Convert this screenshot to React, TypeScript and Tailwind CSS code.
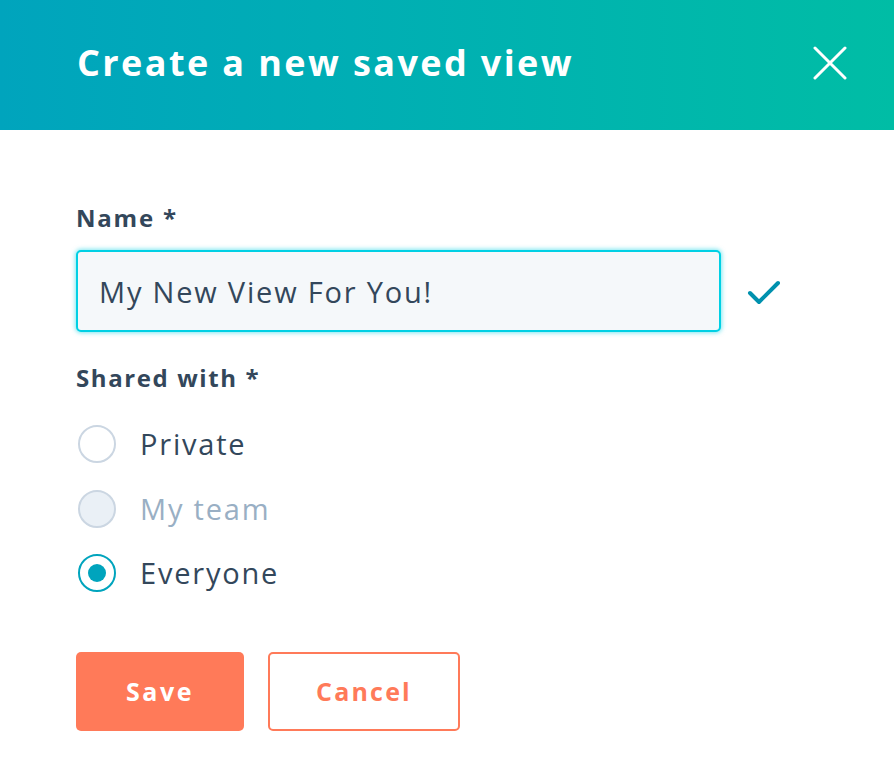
import { useState } from 'react'

const FONT = { fontFamily: '"Open Sans", "Noto Sans", sans-serif' }

type Option = { id: string; label: string; disabled?: boolean }

const OPTIONS: Option[] = [
  { id: 'private', label: 'Private' },
  { id: 'team', label: 'My team', disabled: true },
  { id: 'everyone', label: 'Everyone' },
]

function Radio({ checked, disabled }: { checked: boolean; disabled?: boolean }) {
  if (checked) {
    return (
      <span className="ml-[2px] flex h-[38px] w-[38px] shrink-0 items-center justify-center rounded-full border-2 border-[#00a4bd] bg-white">
        <span className="h-[18px] w-[18px] rounded-full bg-[#00a4bd]" />
      </span>
    )
  }
  return (
    <span
      className={
        disabled
          ? 'ml-[2px] h-[38px] w-[38px] shrink-0 rounded-full border-2 border-[#cbd6e2] bg-[#eaf0f6]'
          : 'ml-[2px] h-[38px] w-[38px] shrink-0 rounded-full border-2 border-[#cbd6e2] bg-white'
      }
    />
  )
}

export default function App() {
  const [name, setName] = useState('My New View For You!')
  const [shared, setShared] = useState('everyone')

  return (
    <div className="min-h-[780px] w-[894px] bg-white text-[#33475b]" style={FONT}>
      <div className="flex h-[130px] items-center justify-between bg-gradient-to-r from-[#00a4bd] to-[#00bda5] pb-[4px] pl-[77px] pr-[44px]">
        <h1 className="text-[36px] font-bold tracking-[2.4px] text-white">Create a new saved view</h1>
        <button className="flex h-[40px] w-[40px] items-center justify-center text-white">
          <svg width="34" height="34" viewBox="0 0 34 34" fill="none" stroke="currentColor" strokeWidth="3" strokeLinecap="round">
            <path d="M2 2 L32 32 M32 2 L2 32" />
          </svg>
        </button>
      </div>

      <div className="px-[76px] pt-[72px]">
        <label className="block text-[24px] font-bold leading-[32px] tracking-[1.8px]">Name *</label>
        <div className="mt-[16px] flex items-center">
          <input
            autoFocus
            value={name}
            onChange={(e) => setName(e.currentTarget.value)}
            className="h-[82px] w-[645px] rounded-[5px] border-2 border-[#00d0e4] bg-[#f5f8fa] px-[21px] text-[29px] tracking-[1.8px] text-[#33475b] caret-[#33475b] shadow-[0_0_4px_1px_rgba(0,208,228,0.5)] outline-none"
            style={FONT}
          />
          <svg className="ml-[26px] mt-[4px]" width="34" height="26" viewBox="0 0 34 26" fill="none" stroke="#0091ae" strokeWidth="4" strokeLinecap="round" strokeLinejoin="round">
            <path d="M3 13 L12 22 L31 3" />
          </svg>
        </div>

        <label className="mt-[30px] block text-[24px] font-bold leading-[32px] tracking-[1.6px]">Shared with *</label>
        <div className="mt-[31px] flex flex-col gap-[26.5px]">
          {OPTIONS.map((o) => (
            <button
              key={o.id}
              disabled={o.disabled}
              onClick={() => setShared(o.id)}
              className="flex items-center gap-[24px] text-left"
            >
              <Radio checked={shared === o.id} disabled={o.disabled} />
              <span
                className={
                  o.disabled
                    ? 'text-[29px] leading-[38px] tracking-[1.8px] text-[#99afc4]'
                    : 'text-[29px] leading-[38px] tracking-[1.8px] text-[#33475b]'
                }
              >
                {o.label}
              </span>
            </button>
          ))}
        </div>

        <div className="mt-[60px] flex gap-[24px]">
          <button className="h-[79px] w-[168px] rounded-[5px] bg-[#ff7a59] text-[25px] font-bold tracking-[2.5px] text-white">Save</button>
          <button className="h-[79px] w-[192px] rounded-[5px] border-2 border-[#ff7a59] bg-white text-[25px] font-bold tracking-[2.2px] text-[#ff7a59]">
            Cancel
          </button>
        </div>
      </div>
    </div>
  )
}
